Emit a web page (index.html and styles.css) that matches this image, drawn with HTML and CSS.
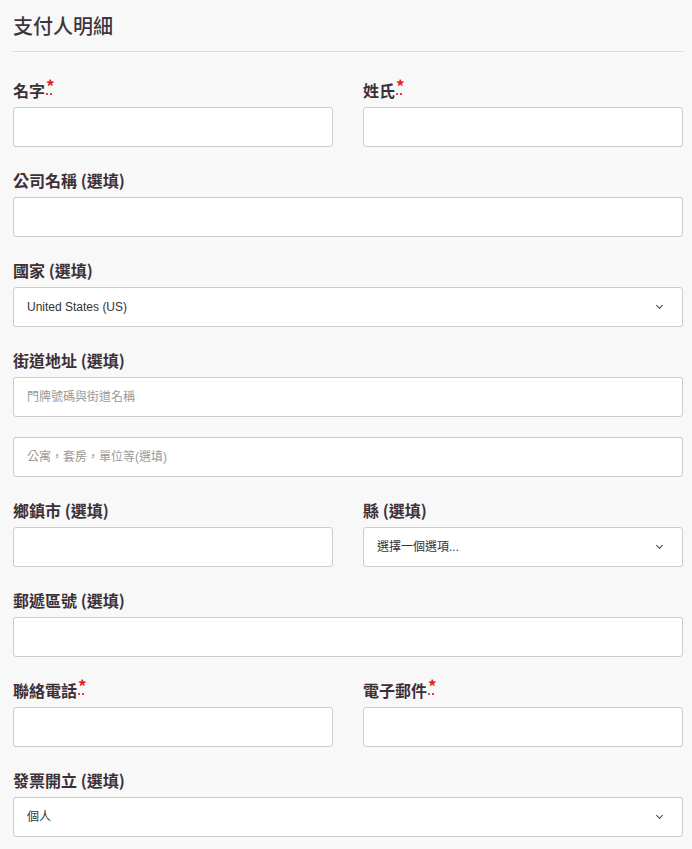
FILE: index.html
```html
<!DOCTYPE html>
<html>
  <head>
    <meta charset="utf-8" />
    <title>支付人明細</title>
    <link rel="stylesheet" href="styles.css">
  </head>

  <body>
    <div class="billing">
      <h3 class="billing-title">支付人明細</h3>

      <div class="fields">
        <!-- 이름 -->
        <p class="field half">
          <label>名字<abbr class="required" title="必填">*</abbr></label>
          <input type="text" class="input" />
        </p>
        <p class="field half">
          <label>姓氏<abbr class="required" title="必填">*</abbr></label>
          <input type="text" class="input" />
        </p>

        <p class="field">
          <label>公司名稱 (選填)</label>
          <input type="text" class="input" />
        </p>

        <p class="field">
          <label>國家 (選填)</label>
          <span class="select">United States (US)</span>
        </p>

        <!-- 주소 -->
        <p class="field">
          <label>街道地址 (選填)</label>
          <input type="text" class="input" placeholder="門牌號碼與街道名稱" />
          <input type="text" class="input" placeholder="公寓，套房，單位等(選填)" />
        </p>

        <p class="field half">
          <label>鄉鎮市 (選填)</label>
          <input type="text" class="input" />
        </p>
        <p class="field half">
          <label>縣 (選填)</label>
          <span class="select">選擇一個選項...</span>
        </p>

        <p class="field">
          <label>郵遞區號 (選填)</label>
          <input type="text" class="input" />
        </p>

        <p class="field half">
          <label>聯絡電話<abbr class="required" title="必填">*</abbr></label>
          <input type="tel" class="input" />
        </p>
        <p class="field half">
          <label>電子郵件<abbr class="required" title="必填">*</abbr></label>
          <input type="email" class="input" />
        </p>

        <p class="field">
          <label>發票開立 (選填)</label>
          <span class="select">個人</span>
        </p>
      </div>
    </div>
  </body>
</html>
```

FILE: styles.css
```css
body {
  margin: 0;
  background: #f8f8f8;
  font-family: "Noto Sans CJK TC", "Liberation Sans", sans-serif;
  color: #3d3037;
}

.billing {
  padding: 11px 9px 0 13px;
}

/* 제목 */
.billing-title {
  margin: 0;
  padding-bottom: 10px;
  border-bottom: 1px solid #ddd;
  font-size: 20px;
  font-weight: 500;
  line-height: 30px;
  color: #3d3540;
}

/* 폼 영역 */
.fields {
  display: flex;
  flex-wrap: wrap;
  column-gap: 30px;
  padding-top: 25px;
}

.field {
  display: flex;
  flex-direction: column;
  width: 100%;
  margin: 0 0 20px;
}

.field.half {
  width: calc(50% - 15px);
}

.field label {
  display: block;
  margin-bottom: 4px;
  font-size: 16px;
  font-weight: 700;
  line-height: 26px;
}

.required {
  margin-left: 1px;
  color: #e2231a;
  font-size: 17px;
  font-weight: 700;
  text-decoration: underline dotted;
  text-underline-offset: 1px;
  position: relative;
  top: -4px;
}

/* 입력창 */
.input,
.select {
  display: block;
  box-sizing: border-box;
  width: 100%;
  height: 40px;
  margin: 0;
  padding: 0 13px;
  border: 1px solid #ccc;
  border-radius: 3px;
  background: #fff;
  font-family: "Liberation Sans", "Noto Sans CJK TC", sans-serif;
  font-size: 12px;
  color: #333;
  outline: none;
}

.input + .input {
  margin-top: 20px;
}

.input::placeholder {
  color: #999;
}

/* 셀렉트 */
.select {
  position: relative;
  line-height: 38px;
}

.select::after {
  content: "";
  position: absolute;
  right: 20px;
  top: 15px;
  width: 4px;
  height: 4px;
  border-right: 1.5px solid #444;
  border-bottom: 1.5px solid #444;
  transform: rotate(45deg);
}
```
